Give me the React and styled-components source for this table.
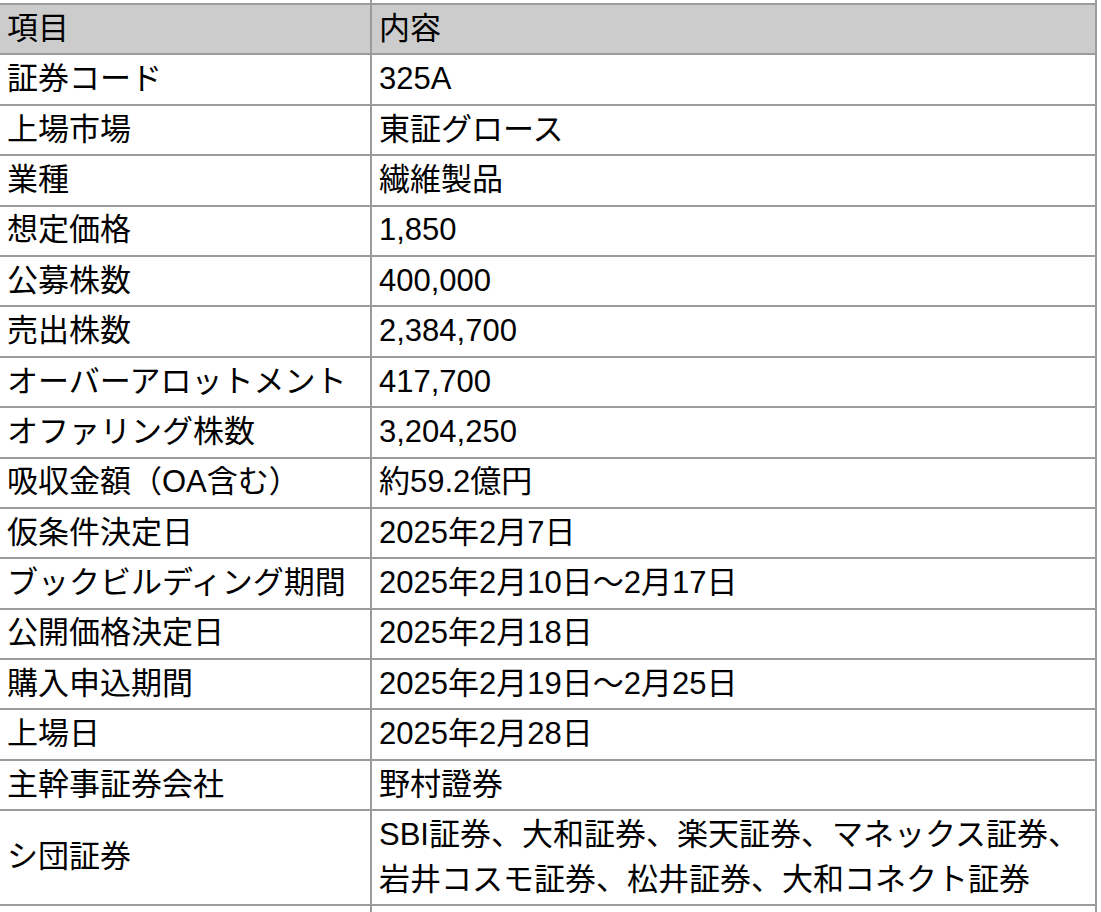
import React from 'react'
import styled, { createGlobalStyle } from 'styled-components'

const GlobalStyle = createGlobalStyle`
html, body {
    margin: 0;
    padding: 0;
    background: #fff;
    overflow: hidden;
}
body {
    width: 1101px;
    height: 912px;
    font-family: "Liberation Sans", "Noto Sans CJK JP", sans-serif;
    color: #000;
}
`

const rows = [
    ['証券コード', '325A'],
    ['上場市場', '東証グロース'],
    ['業種', '繊維製品'],
    ['想定価格', '1,850'],
    ['公募株数', '400,000'],
    ['売出株数', '2,384,700'],
    ['オーバーアロットメント', '417,700'],
    ['オファリング株数', '3,204,250'],
    ['吸収金額（OA含む）', '約59.2億円'],
    ['仮条件決定日', '2025年2月7日'],
    ['ブックビルディング期間', '2025年2月10日〜2月17日'],
    ['公開価格決定日', '2025年2月18日'],
    ['購入申込期間', '2025年2月19日〜2月25日'],
    ['上場日', '2025年2月28日'],
    ['主幹事証券会社', '野村證券'],
]

const App = () => {
    return (
        <>
            <GlobalStyle />
            <Page>
                <IpoTable>
                    <colgroup>
                        <col style={{ width: '372px' }} />
                        <col style={{ width: '725px' }} />
                    </colgroup>
                    <tbody>
                        <Row $spacer>
                            <Cell />
                            <Cell />
                        </Row>
                        <Row>
                            <HeadCell>項目</HeadCell>
                            <HeadCell>内容</HeadCell>
                        </Row>
                        {rows.map(([label, value]) => (
                            <Row key={label}>
                                <Cell>{label}</Cell>
                                <Cell>{value}</Cell>
                            </Row>
                        ))}
                        <Row>
                            <Cell>シ団証券</Cell>
                            <Cell>
                                SBI証券、大和証券、楽天証券、マネックス証券、<br />
                                岩井コスモ証券、松井証券、大和コネクト証券
                            </Cell>
                        </Row>
                        <Row $spacer>
                            <Cell />
                            <Cell />
                        </Row>
                    </tbody>
                </IpoTable>
            </Page>
        </>
    )
}

const Page = styled.main`
width: 100%;
height: 912px;
overflow: hidden;
`

const IpoTable = styled.table`
width: 1099px;
margin-top: -45.4px;
margin-left: -2px;
border-collapse: collapse;
table-layout: fixed;
font-size: 31px;
`

const Row = styled.tr`
height: ${props => (props.$spacer ? '48.4px' : 'auto')};
`

const Cell = styled.td`
border: 2px solid #9b9b9b;
padding: 1.8px 7px;
line-height: 44.8px;
vertical-align: middle;
text-align: left;
white-space: nowrap;
`

const HeadCell = styled.th`
border: 2px solid #9b9b9b;
padding: 1.8px 7px;
line-height: 44.8px;
vertical-align: middle;
text-align: left;
font-weight: normal;
background: #cccccc;
`

export default App
